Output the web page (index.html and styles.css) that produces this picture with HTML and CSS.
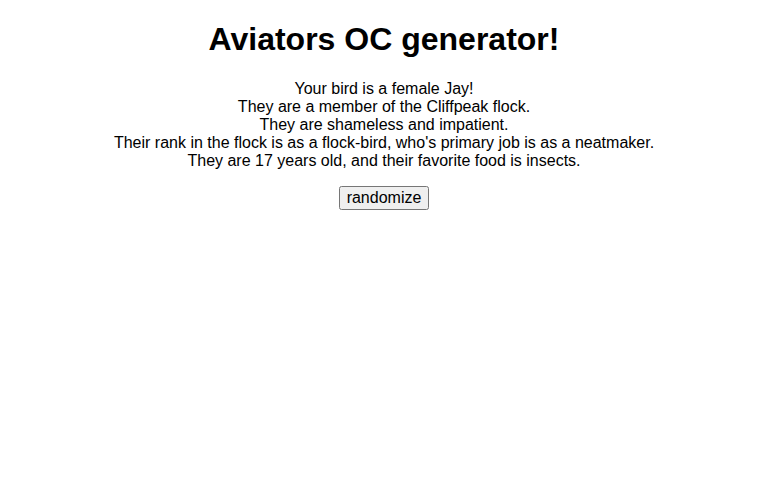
FILE: index.html
```html
<!DOCTYPE html>
<html lang="en">
<head>
  <meta charset="UTF-8" />
  <meta name="viewport" content="width=device-width, initial-scale=1.0"/>
  <title>Aviators OC generator</title>
  <link rel="stylesheet" href="styles.css">
</head>
<body>
  <h1>Aviators OC generator!</h1>

  <p class="result" id="result">
    Your bird is a female Jay!<br>
    They are a member of the Cliffpeak flock.<br>
    They are shameless and impatient.<br>
    Their rank in the flock is as a flock-bird, who's primary job is as a neatmaker.<br>
    They are 17 years old, and their favorite food is insects.
  </p>

  <button class="randomize" id="randomize">randomize</button>
</body>
</html>
```

FILE: styles.css
```css
body {
  margin: 0 8px;
  font-family: "Liberation Sans", Arial, sans-serif;
  text-align: center;
  color: #000;
  background: #fff;
}

h1 {
  font-size: 32px;
}

.result {
  font-size: 16px;
}

.randomize {
  font-family: "Liberation Sans", Arial, sans-serif;
  font-size: 16px;
}
```
